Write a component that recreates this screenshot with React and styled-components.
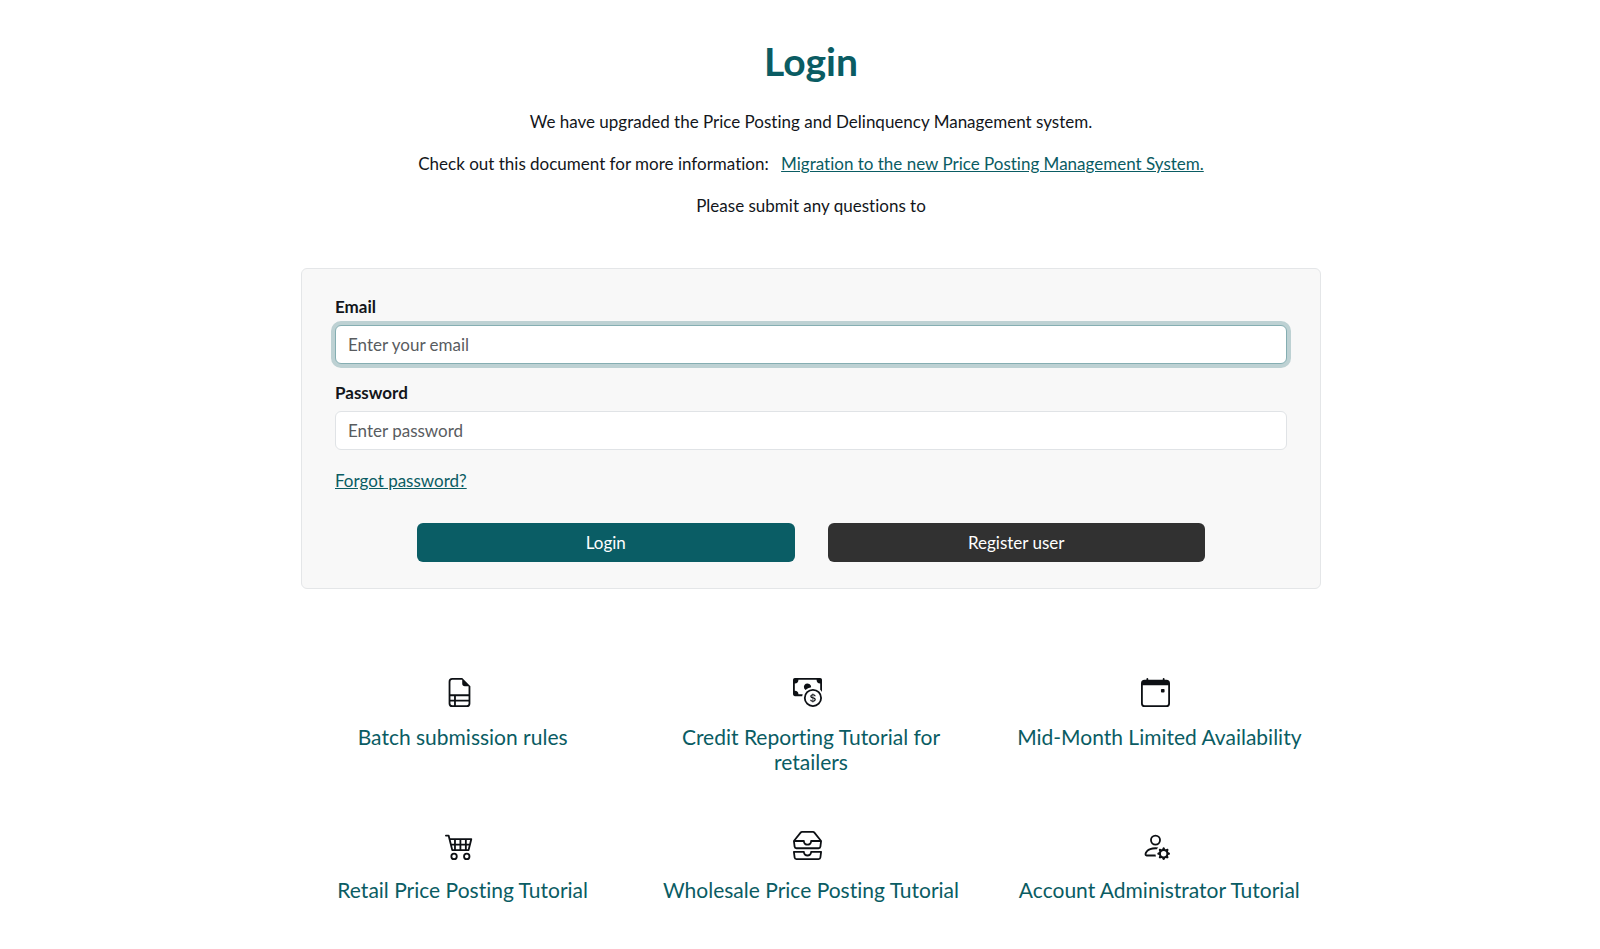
/* eslint-disable react/prop-types */
import React, { useState } from "react";
import styled, { createGlobalStyle } from "styled-components";
import {
  BsCalendarEvent,
  BsCart4,
  BsCashCoin,
  BsFileEarmarkRuled,
  BsInboxes,
  BsPersonGear,
} from "react-icons/bs";

const GlobalStyle = createGlobalStyle`
  *, *::before, *::after {
    box-sizing: border-box;
  }

  body {
    margin: 0;
    background: #fff;
    color: #13161b;
    font-family: Lato, "Open Sans", sans-serif;
    font-size: 17px;
    font-variant-ligatures: none;
    line-height: 25px;
  }
`;

const Page = styled.main`
  display: flex;
  flex-direction: column;
  align-items: center;
  padding: 38px 0 40px 22px;
`;

const Title = styled.h1`
  margin: 0 0 25px;
  color: #0a5c63;
  font-size: 39px;
  font-weight: 700;
  line-height: 46px;
`;

const Intro = styled.div`
  display: flex;
  flex-direction: column;
  gap: 17px;
  margin-bottom: 50px;
  text-align: center;

  p {
    margin: 0;
  }
`;

const TextLink = styled.a`
  color: #0a5c63;
  text-decoration: underline;
`;

const DocLink = styled(TextLink)`
  margin-left: 8px;
`;

const LoginForm = styled.form`
  display: flex;
  flex-direction: column;
  align-items: flex-start;
  width: 100%;
  max-width: 1020px;
  padding: 25px 33px;
  border: 1px solid #e4e6e8;
  border-radius: 6px;
  background: #f8f8f8;
`;

const Field = styled.div`
  display: flex;
  flex-direction: column;
  gap: 6px;
  width: 100%;
  margin-bottom: 16px;
`;

const Label = styled.label`
  font-weight: 700;
`;

const Input = styled.input`
  width: 100%;
  height: 39px;
  padding: 6px 12px;
  border: 1px solid #e0e3e6;
  border-radius: 6px;
  background: #fff;
  color: inherit;
  font: inherit;

  &::placeholder {
    color: #595c5f;
    opacity: 1;
  }

  &:focus {
    border-color: #85aeb2;
    outline: 0;
    box-shadow: 0 0 0 4px rgba(10, 92, 99, 0.25);
  }
`;

const ForgotLink = styled(TextLink)`
  margin-top: 2px;
`;

const Actions = styled.div`
  display: grid;
  grid-template-columns: 1fr 1fr;
  gap: 33px;
  width: 100%;
  margin: 30px 0 1px;
  padding: 0 82px;
`;

const Button = styled.button`
  height: 39px;
  padding: 6px 12px;
  border: 0;
  border-radius: 6px;
  background: ${(props) => (props.$dark ? "#313131" : "#0a5d65")};
  color: #fff;
  font: inherit;
  cursor: pointer;
`;

const Guides = styled.nav`
  display: grid;
  grid-template-columns: repeat(3, 1fr);
  row-gap: 57px;
  width: 100%;
  max-width: 1045px;
  margin-top: 89px;
`;

const Guide = styled.div`
  display: flex;
  flex-direction: column;
  align-items: center;
  gap: 17px;
  padding: 0 16px;
`;

const GuideIcon = styled.span`
  display: flex;
  padding-right: 7px;
  color: #0d1014;
  font-size: 29px;
`;

const GuideLink = styled.a`
  color: #0a5c63;
  font-size: 21px;
  text-align: center;
  text-decoration: none;
`;

const guides = [
  { title: "Batch submission rules", icon: BsFileEarmarkRuled },
  { title: "Credit Reporting Tutorial for retailers", icon: BsCashCoin },
  { title: "Mid-Month Limited Availability", icon: BsCalendarEvent },
  { title: "Retail Price Posting Tutorial", icon: BsCart4 },
  { title: "Wholesale Price Posting Tutorial", icon: BsInboxes },
  { title: "Account Administrator Tutorial", icon: BsPersonGear },
];

const GuideItem = ({ title, icon: Icon }) => (
  <Guide>
    <GuideIcon>
      <Icon aria-hidden="true" />
    </GuideIcon>
    <GuideLink href="#guide">{title}</GuideLink>
  </Guide>
);

const App = () => {
  const [email, setEmail] = useState("");
  const [password, setPassword] = useState("");

  return (
    <>
      <GlobalStyle />
      <Page>
        <Title>Login</Title>
        <Intro>
          <p>
            We have upgraded the Price Posting and Delinquency Management
            system.
          </p>
          <p>
            Check out this document for more information:{" "}
            <DocLink href="#migration">
              Migration to the new Price Posting Management System.
            </DocLink>
          </p>
          <p>Please submit any questions to</p>
        </Intro>

        <LoginForm onSubmit={(e) => e.preventDefault()}>
          <Field>
            <Label htmlFor="email">Email</Label>
            <Input
              id="email"
              type="email"
              placeholder="Enter your email"
              value={email}
              onChange={(e) => setEmail(e.target.value)}
              autoFocus
            />
          </Field>
          <Field>
            <Label htmlFor="password">Password</Label>
            <Input
              id="password"
              type="password"
              placeholder="Enter password"
              value={password}
              onChange={(e) => setPassword(e.target.value)}
            />
          </Field>
          <ForgotLink href="#forgot">Forgot password?</ForgotLink>
          <Actions>
            <Button type="submit">Login</Button>
            <Button type="button" $dark>
              Register user
            </Button>
          </Actions>
        </LoginForm>

        <Guides>
          {guides.map((guide) => (
            <GuideItem key={guide.title} {...guide} />
          ))}
        </Guides>
      </Page>
    </>
  );
};

export default App;
